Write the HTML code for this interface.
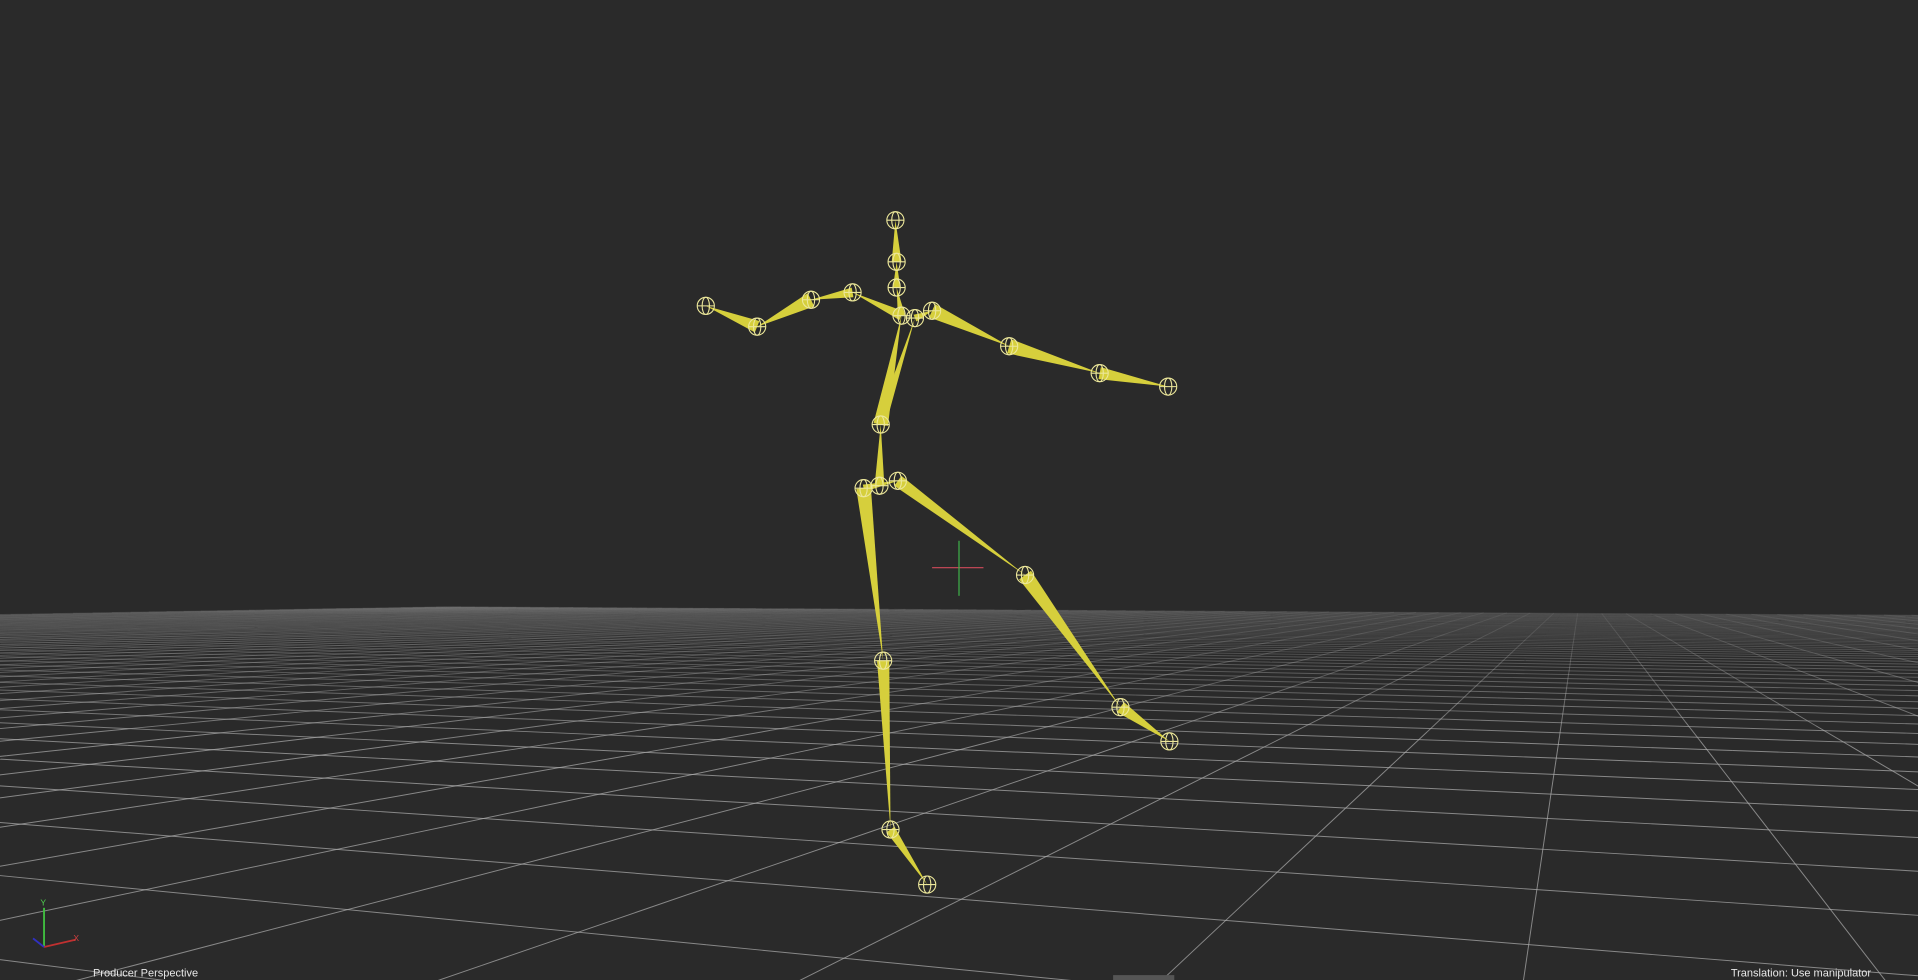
<!DOCTYPE html>
<html><head><meta charset="utf-8"><style>
html,body{margin:0;padding:0;background:#2a2a2a;overflow:hidden;width:1918px;height:980px}
svg{display:block}
</style></head><body>
<svg id="s" width="1918" height="980" viewBox="0 0 1568 801" preserveAspectRatio="none" xmlns="http://www.w3.org/2000/svg">
<rect width="1568" height="801" fill="#2a2a2a"/>
<g id="grid" stroke="#b0b0b0" stroke-width="0.8"></g>
<g id="bones" fill="#d6cf3c"></g>
<g id="joints" fill="none" stroke="#ece79a" stroke-width="0.9"></g>
<line x1="762" y1="464" x2="804" y2="464" stroke="#d04a5a" stroke-width="1"/>
<line x1="784" y1="442" x2="784" y2="487" stroke="#3fb04a" stroke-width="1"/>
<g stroke-width="1.5">
<line x1="36" y1="774" x2="36" y2="742" stroke="#40c040"/>
<line x1="36" y1="774" x2="62" y2="768" stroke="#c03030"/>
<line x1="36" y1="774" x2="27" y2="767" stroke="#3030c0"/>
</g>
<text x="33" y="740" fill="#50d050" font-family="Liberation Sans,sans-serif" font-size="7">Y</text>
<text x="60" y="769" fill="#d04040" font-family="Liberation Sans,sans-serif" font-size="7">X</text>
<text x="76" y="798" fill="#e8e8e8" font-family="Liberation Sans,sans-serif" font-size="9">Producer Perspective</text>
<text x="1415" y="798" fill="#e8e8e8" font-family="Liberation Sans,sans-serif" font-size="9">Translation: Use manipulator</text>
<rect x="910" y="797" width="50" height="4" fill="#555"/>
</svg>
<script>
var NS="http://www.w3.org/2000/svg";
function L(g,x1,y1,x2,y2,op){var l=document.createElementNS(NS,"line");l.setAttribute("x1",x1.toFixed(1));l.setAttribute("y1",y1.toFixed(1));l.setAttribute("x2",x2.toFixed(1));l.setAttribute("y2",y2.toFixed(1));if(op!==undefined)l.setAttribute("stroke-opacity",op.toFixed(2));g.appendChild(l);}
var g=document.getElementById("grid");
var cx=784,yh=480,f=1274,H=1.17,r=-0.38,Z0=22,N=55,zmin=1.2;
var c=Math.cos(r),s=Math.sin(r);
function cam(X,Z){return [X*c-Z*s, X*s+Z*c+Z0];}
function proj(p){return [cx+f*p[0]/p[1], yh+f*H/p[1]];}
function seg(X1,Z1,X2,Z2){
 var n=60;
 for(var i=0;i<n;i++){
  var a=cam(X1+(X2-X1)*i/n,Z1+(Z2-Z1)*i/n), b=cam(X1+(X2-X1)*(i+1)/n,Z1+(Z2-Z1)*(i+1)/n);
  if(a[1]<zmin&&b[1]<zmin)continue;
  if(a[1]<zmin){var t=(zmin-a[1])/(b[1]-a[1]);a=[a[0]+(b[0]-a[0])*t,zmin];}
  if(b[1]<zmin){var t=(zmin-b[1])/(a[1]-b[1]);b=[b[0]+(a[0]-b[0])*t,zmin];}
  var pa=proj(a),pb=proj(b);
  if(Math.max(pa[0],pb[0])<-50||Math.min(pa[0],pb[0])>1620)continue;
  var z=(a[1]+b[1])/2;var op=Math.max(0.12,Math.min(0.7,8/z));
  L(g,pa[0],pa[1],pb[0],pb[1],op);
 }
}
for(var k=-N;k<=N;k++){seg(k,-N,k,N);seg(-N,k,N,k);}
var J={head:[732,180],n1:[733,214],n2:[733,235],c1:[737,258],c2:[748,260],c3:[762,254],sp:[720,347],h1:[706,399],h2:[719,397],h3:[734,393],
la1:[697,239],la2:[663,245],la3:[619,267],la4:[577,250],
ra2:[825,283],ra3:[899,305],ra4:[955,316],
ll2:[722,540],ll3:[728,678],ll4:[758,723],
rl2:[838,470],rl3:[916,578],rl4:[956,606]};
var B=[["n1","head",4],["n2","n1",3],["c1","n2",3],["sp","c1",6],["sp","c2",4],["h2","sp",4],
["c1","la1",4],["la1","la2",4],["la2","la3",6],["la3","la4",5],
["c3","ra2",6],["ra2","ra3",6],["ra3","ra4",5],["c2","c3",3],
["h1","ll2",6],["ll2","ll3",5],["ll3","ll4",4],["h1","h3",3],
["h3","rl2",5],["rl2","rl3",6],["rl3","rl4",5]];
var bg=document.getElementById("bones");
B.forEach(function(b){var p=J[b[0]],q=J[b[1]],w=b[2];var dx=q[0]-p[0],dy=q[1]-p[1],d=Math.hypot(dx,dy);var nx=-dy/d*w,ny=dx/d*w;
var pg=document.createElementNS(NS,"polygon");pg.setAttribute("points",(p[0]+nx)+","+(p[1]+ny)+" "+(p[0]-nx)+","+(p[1]-ny)+" "+q[0]+","+q[1]);bg.appendChild(pg);});
var jg=document.getElementById("joints");
for(var k in J){var p=J[k];var ci=document.createElementNS(NS,"circle");ci.setAttribute("cx",p[0]);ci.setAttribute("cy",p[1]);ci.setAttribute("r",7);jg.appendChild(ci);
var e=document.createElementNS(NS,"ellipse");e.setAttribute("cx",p[0]);e.setAttribute("cy",p[1]);e.setAttribute("rx",3);e.setAttribute("ry",7);jg.appendChild(e);
L(jg,p[0]-7,p[1],p[0]+7,p[1]);}
</script>
</body></html>
